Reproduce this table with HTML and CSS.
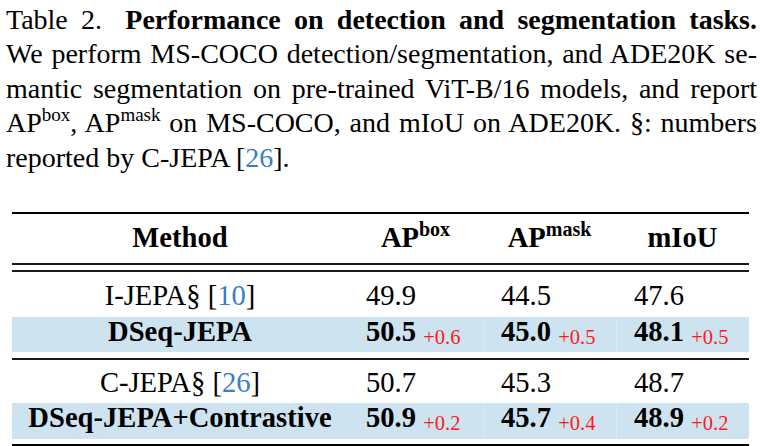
FILE: index.html
```html
<!DOCTYPE html>
<html>
<head>
<meta charset="utf-8">
<link rel="stylesheet" href="styles.css">
</head>
<body>
<div class="caption">
  <span class="line"><span class="label">Table 2.</span> <b>Performance on detection and segmentation tasks.</b></span>
  <span class="line">We perform MS-COCO detection/segmentation, and ADE20K se-</span>
  <span class="line">mantic segmentation on pre-trained ViT-B/16 models, and report</span>
  <span class="line">AP<sup class="csup">box</sup>, AP<sup class="csup">mask</sup> on MS-COCO, and mIoU on ADE20K. §: numbers</span>
  <span class="line last">reported by C-JEPA [<span class="cite">26</span>].</span>
</div>

<div class="tbl">
  <div class="rule thick"></div>
  <div class="row head">
    <div class="cell c1">Method</div>
    <div class="cell">AP<sup class="hsup">box</sup></div>
    <div class="cell">AP<sup class="hsup">mask</sup></div>
    <div class="cell">mIoU</div>
  </div>
  <div class="rule"></div>
  <div class="gap g5"></div>
  <div class="rule"></div>
  <div class="row body first">
    <div class="cell c1">I-JEPA§ [<span class="cite">10</span>]</div>
    <div class="cell num">49.9</div>
    <div class="cell num">44.5</div>
    <div class="cell num">47.6</div>
  </div>
  <div class="row body hl hl1">
    <div class="cell c1"><b>DSeq-JEPA</b></div>
    <div class="cell num"><b>50.5</b> <span class="delta">+0.6</span></div>
    <div class="cell num sep"><b>45.0</b> <span class="delta">+0.5</span></div>
    <div class="cell num sep"><b>48.1</b> <span class="delta">+0.5</span></div>
  </div>
  <div class="gap g6"></div>
  <div class="rule"></div>
  <div class="row body third">
    <div class="cell c1">C-JEPA§ [<span class="cite">26</span>]</div>
    <div class="cell num">50.7</div>
    <div class="cell num">45.3</div>
    <div class="cell num">48.7</div>
  </div>
  <div class="row body hl hl2">
    <div class="cell c1"><b>DSeq-JEPA+Contrastive</b></div>
    <div class="cell num"><b>50.9</b> <span class="delta">+0.2</span></div>
    <div class="cell num sep"><b>45.7</b> <span class="delta">+0.4</span></div>
    <div class="cell num sep"><b>48.9</b> <span class="delta">+0.2</span></div>
  </div>
  <div class="gap g5"></div>
  <div class="rule thick"></div>
</div>
</body>
</html>
```

FILE: styles.css
```css
html, body {
  margin: 0;
  padding: 0;
  background: #ffffff;
  color: #000000;
  font-family: "Liberation Serif", "Times New Roman", serif;
}

.caption {
  margin: 0 3px 0 6px;
  padding-top: 3px;
  font-size: 28px;
  line-height: 34.4px;
}

.caption .line {
  display: block;
  text-align: justify;
  text-align-last: justify;
  white-space: nowrap;
}

.caption .line.last {
  text-align: left;
  text-align-last: left;
}

.caption .label {
  margin-right: 10px;
}

.csup {
  font-size: 19px;
  line-height: 0;
  vertical-align: 11px;
}

.cite {
  color: #3a7fc1;
}

.tbl {
  margin: 37px 0 0 12px;
  width: 737px;
  font-size: 28.6px;
}

.rule {
  height: 2px;
  background: #1a1a1a;
}

.rule.thick {
  background: #000000;
}

.gap.g5 { height: 5px; }
.gap.g6 { height: 6px; }

.row {
  display: grid;
  grid-template-columns: 336px 135px 133px 133px;
  line-height: 30px;
}

.cell {
  white-space: nowrap;
}

.head {
  height: 49px;
  padding-top: 9px;
  box-sizing: border-box;
  font-weight: bold;
  text-align: center;
}

.hsup {
  font-size: 20px;
  line-height: 0;
  vertical-align: 11px;
}

.body .c1 {
  text-align: center;
}

.body .num {
  padding-left: 18px;
}

.first { height: 45px; padding-top: 9px; box-sizing: border-box; }
.hl1 { height: 35px; padding-top: 0; box-sizing: border-box; }
.third { height: 43px; padding-top: 8px; box-sizing: border-box; }
.hl2 { height: 36px; padding-top: 0; box-sizing: border-box; }

.hl .cell {
  background: #cde4f0;
}

.hl .sep {
  box-shadow: inset 1px 0 0 #d9ebf5;
}

.delta {
  color: #ff1a1a;
  font-size: 20.5px;
  vertical-align: -3px;
  line-height: 0;
}
```
